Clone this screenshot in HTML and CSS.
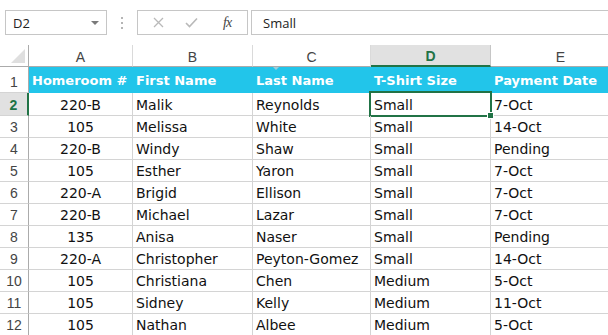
FILE: index.html
```html
<!DOCTYPE html>
<html>
<head>
<meta charset="utf-8">
<link rel="stylesheet" href="styles.css">
</head>
<body>
<div class="toolbar">
  <div class="namebox"><span>D2</span><span class="caret"></span></div>
  <div class="dots"><i></i><i></i><i></i></div>
  <div class="fbuttons">
    <svg class="ic-x" width="11" height="11" viewBox="0 0 11 11"><path d="M1 1L10 10M10 1L1 10" stroke="#b9b9b9" stroke-width="1.3" fill="none"/></svg>
    <svg class="ic-check" width="13" height="11" viewBox="0 0 13 11"><path d="M1 6L4.5 9.5L12 1.5" stroke="#b9b9b9" stroke-width="1.6" fill="none"/></svg>
    <span class="fx">fx</span>
  </div>
  <div class="finput">Small</div>
</div>
<div class="sheet">
  <div class="corner"><span class="tri"></span></div>
  <div class="ch">A</div><div class="ch">B</div><div class="ch">C</div><div class="ch sel">D</div><div class="ch">E</div>

  <div class="rh">1</div>
  <div class="c hd">Homeroom #</div><div class="c hd">First Name</div><div class="c hd">Last Name<span class="mark"></span></div><div class="c hd">T-Shirt Size</div><div class="c hd">Payment Date</div>

  <div class="rh sel">2</div>
  <div class="c ctr">220-B</div><div class="c">Malik</div><div class="c">Reynolds</div><div class="c active">Small<span class="handle"></span></div><div class="c">7-Oct</div>

  <div class="rh">3</div>
  <div class="c ctr">105</div><div class="c">Melissa</div><div class="c">White</div><div class="c">Small</div><div class="c">14-Oct</div>

  <div class="rh">4</div>
  <div class="c ctr">220-B</div><div class="c">Windy</div><div class="c">Shaw</div><div class="c">Small</div><div class="c">Pending</div>

  <div class="rh">5</div>
  <div class="c ctr">105</div><div class="c">Esther</div><div class="c">Yaron</div><div class="c">Small</div><div class="c">7-Oct</div>

  <div class="rh">6</div>
  <div class="c ctr">220-A</div><div class="c">Brigid</div><div class="c">Ellison</div><div class="c">Small</div><div class="c">7-Oct</div>

  <div class="rh">7</div>
  <div class="c ctr">220-B</div><div class="c">Michael</div><div class="c">Lazar</div><div class="c">Small</div><div class="c">7-Oct</div>

  <div class="rh">8</div>
  <div class="c ctr">135</div><div class="c">Anisa</div><div class="c">Naser</div><div class="c">Small</div><div class="c">Pending</div>

  <div class="rh">9</div>
  <div class="c ctr">220-A</div><div class="c">Christopher</div><div class="c">Peyton-Gomez</div><div class="c">Small</div><div class="c">14-Oct</div>

  <div class="rh">10</div>
  <div class="c ctr">105</div><div class="c">Christiana</div><div class="c">Chen</div><div class="c">Medium</div><div class="c">5-Oct</div>

  <div class="rh">11</div>
  <div class="c ctr">105</div><div class="c">Sidney</div><div class="c">Kelly</div><div class="c">Medium</div><div class="c">11-Oct</div>

  <div class="rh">12</div>
  <div class="c ctr">105</div><div class="c">Nathan</div><div class="c">Albee</div><div class="c">Medium</div><div class="c">5-Oct</div>
</div>
</body>
</html>
```
FILE: styles.css
```css
html, body {
  margin: 0;
  padding: 0;
  background: #fff;
  overflow: hidden;
}
body {
  width: 608px;
  height: 335px;
  font-family: "DejaVu Sans", sans-serif;
}
.toolbar {
  height: 45px;
  box-sizing: border-box;
  padding: 10px 0 10px 5px;
  display: flex;
  align-items: stretch;
  font-family: "Open Sans", sans-serif;
  font-size: 13px;
  color: #222;
}
.namebox {
  width: 102px;
  box-sizing: border-box;
  border: 1px solid #c6c6c6;
  display: flex;
  align-items: center;
  justify-content: space-between;
  padding: 0 7px 0 7px;
}
.caret {
  width: 0;
  height: 0;
  border-left: 4px solid transparent;
  border-right: 4px solid transparent;
  border-top: 4px solid #7a7a7a;
}
.dots {
  width: 30px;
  display: flex;
  flex-direction: column;
  align-items: center;
  justify-content: center;
  gap: 3px;
}
.dots i {
  display: block;
  width: 2px;
  height: 2px;
  background: #b5b5b5;
}
.fbuttons {
  width: 111px;
  box-sizing: border-box;
  border: 1px solid #c6c6c6;
  display: flex;
  align-items: center;
  padding-left: 15px;
}
.ic-x { margin-right: 21px; }
.ic-check { margin-right: 25px; }
.fx {
  font-family: "Liberation Serif", serif;
  font-style: italic;
  font-size: 14px;
  color: #444;
  letter-spacing: -1px;
}
.finput {
  flex: 1;
  margin-left: 3px;
  box-sizing: border-box;
  border: 1px solid #c6c6c6;
  border-right: none;
  display: flex;
  align-items: center;
  padding-left: 11px;
}
.sheet {
  display: grid;
  grid-template-columns: 29px 104px 120px 118px 120px 140px;
  grid-template-rows: 22px 26px 23px repeat(10, 22px);
  font-size: 14px;
  color: #111;
}
.sheet > div {
  box-sizing: border-box;
  border-right: 1px solid #d4d4d4;
  border-bottom: 1px solid #d4d4d4;
  white-space: nowrap;
  overflow: visible;
}
.corner {
  position: relative;
  border-right-color: #ababab !important;
  border-bottom-color: #ababab !important;
}
.tri {
  position: absolute;
  right: 3px;
  bottom: 3px;
  width: 0;
  height: 0;
  border-left: 14px solid transparent;
  border-bottom: 14px solid #dfdfdf;
}
.ch {
  font-family: "Liberation Sans", sans-serif;
  font-size: 14px;
  color: #444;
  display: flex;
  align-items: center;
  justify-content: center;
  padding-top: 2px;
  border-right-color: #dadada !important;
  border-bottom-color: #ababab !important;
}
.ch.sel {
  background: #e1e1e1;
  color: #217346;
  font-weight: bold;
  border-bottom: 2px solid #217346 !important;
  border-right-color: #c6c6c6 !important;
}
.rh {
  font-family: "Liberation Sans", sans-serif;
  font-size: 14px;
  color: #444;
  display: flex;
  align-items: flex-end;
  justify-content: center;
  padding-bottom: 2px;
  border-right-color: #ababab !important;
}
.rh.sel {
  background: #e1e1e1;
  color: #217346;
  font-weight: bold;
  border-right: 2px solid #217346 !important;
}
.c {
  display: flex;
  align-items: flex-end;
  padding: 0 0 2px 3px;
  line-height: 16px;
  position: relative;
}
.c.ctr { justify-content: center; padding-left: 0; }
.c.hd {
  background: #22c5ea;
  border-color: #22c5ea !important;
  color: #fff;
  font-weight: bold;
  font-size: 13px;
  padding-bottom: 3px;
}
.mark {
  position: absolute;
  left: 20px;
  top: 0;
  width: 0;
  height: 0;
  border-left: 3px solid transparent;
  border-right: 3px solid transparent;
  border-top: 3px solid #9ccfdc;
}
.c.active::after {
  content: "";
  position: absolute;
  left: -2px;
  top: -2px;
  right: -2px;
  bottom: -2px;
  border: 2px solid #217346;
  pointer-events: none;
}
.handle {
  position: absolute;
  right: -4px;
  bottom: -4px;
  width: 5px;
  height: 5px;
  background: #217346;
  border: 1px solid #fff;
  z-index: 2;
}
```
